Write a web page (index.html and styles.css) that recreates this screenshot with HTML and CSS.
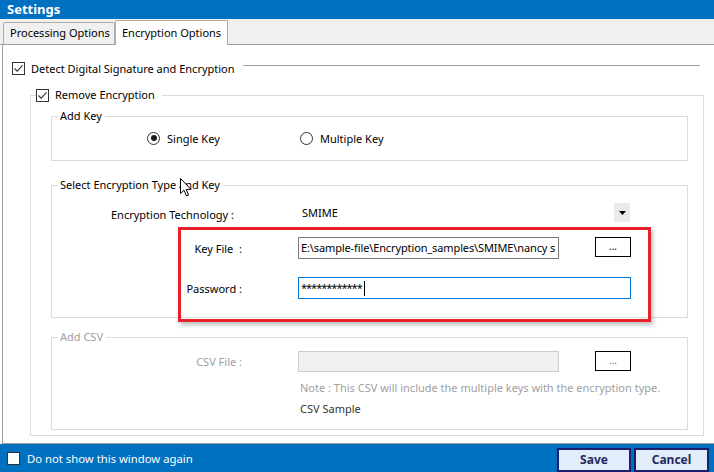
FILE: index.html
```html
<!DOCTYPE html>
<html>
<head>
<meta charset="utf-8">
<title>Settings</title>
<link rel="stylesheet" href="styles.css">
</head>
<body>
<div class="window">
  <div class="titlebar">Settings</div>
  <div class="tabstrip">
    <div class="tab">Processing Options</div>
    <div class="tab active">Encryption Options</div>
  </div>
  <div class="panel">
    <div class="detect-row">
      <span class="chk"><svg viewBox="0 0 13 13" width="13" height="13"><path d="M2.5 6.5 L5.2 9.2 L10.5 3.4" fill="none" stroke="#333" stroke-width="1.1"/></svg></span>
      <span class="detect-label">Detect Digital Signature and Encryption</span>
      <span class="rule"></span>
    </div>
    <fieldset class="grp grp-remove">
      <legend class="legend-chk"><span class="chk"><svg viewBox="0 0 13 13" width="13" height="13"><path d="M2.5 6.5 L5.2 9.2 L10.5 3.4" fill="none" stroke="#333" stroke-width="1.1"/></svg></span><span class="legend-text">Remove Encryption</span></legend>

      <fieldset class="grp grp-inner grp-addkey">
        <legend>Add Key</legend>
        <div class="radio-row">
          <div class="radio-item"><span class="radio on"></span><span>Single Key</span></div>
          <div class="radio-item"><span class="radio"></span><span>Multiple Key</span></div>
        </div>
      </fieldset>

      <fieldset class="grp grp-inner grp-select">
        <legend>Select Encryption Type and Key</legend>
        <div class="form-row row-tech">
          <span class="flabel tech-label">Encryption Technology :</span>
          <div class="combo"><span class="combo-text">SMIME</span><span class="combo-arrow"><svg viewBox="0 0 7 4" width="7" height="4"><path d="M0 0 H7 L3.5 4 Z" fill="#000"/></svg></span></div>
        </div>
        <div class="form-row row-key">
          <span class="flabel">Key File&nbsp; :</span>
          <div class="textbox keyfile">E:\sample-file\Encryption_samples\SMIME\nancy s</div>
          <div class="dots-btn">...</div>
        </div>
        <div class="form-row row-pwd">
          <span class="flabel">Password :</span>
          <div class="textbox password"><span class="stars">************</span><span class="caret"></span></div>
        </div>
      </fieldset>

      <fieldset class="grp grp-inner grp-csv">
        <legend>Add CSV</legend>
        <div class="form-row row-csv">
          <span class="flabel">CSV File :</span>
          <div class="textbox csvfile"></div>
          <div class="dots-btn dim">...</div>
        </div>
        <div class="note">Note : This CSV will include the multiple keys with the encryption type.</div>
        <div class="sample">CSV Sample</div>
      </fieldset>
    </fieldset>
  </div>
  <div class="footer">
    <div class="dont-show"><span class="chk white"></span><span>Do not show this window again</span></div>
    <div class="actions">
      <div class="action-btn">Save</div>
      <div class="action-btn">Cancel</div>
    </div>
  </div>
  <div class="highlight"></div>
  <svg class="cursor" viewBox="0 0 12 19" width="12" height="19"><path d="M0.5 0.5 L0.5 15.5 L4 12.2 L6.5 18 L8.6 17.1 L6.2 11.4 L11 11.4 Z" fill="#fff" stroke="#000" stroke-width="1"/></svg>
</div>
</body>
</html>
```
FILE: styles.css
```css
* { box-sizing: border-box; }
body {
  margin: 0;
  font-family: "Noto Sans", "Open Sans", sans-serif;
  font-size: 11px;
  color: #000;
}
.window {
  position: relative;
  width: 714px;
  height: 472px;
  overflow: hidden;
  background: #fff;
}
.titlebar {
  height: 19px;
  background: #0070c0;
  color: #fff;
  font-weight: bold;
  font-size: 13px;
  line-height: 19px;
  padding-left: 7px;
}
.tabstrip {
  height: 26px;
  background: #f0f0f0;
  border-bottom: 1px solid #a0a0a0;
  display: flex;
  align-items: flex-end;
  padding-left: 3px;
}
.tab {
  height: 22px;
  border: 1px solid #acacac;
  border-bottom: none;
  padding: 0 0 0 6px;
  width: 112px;
  line-height: 20px;
  background: #f0f0f0;
  border-radius: 2px 2px 0 0;
}
.tab.active {
  height: 25px;
  width: 113px;
  margin-bottom: -1px;
  background: #fff;
  line-height: 24px;
  padding-left: 6px;
}
.panel {
  height: 399px;
  margin-left: 2px;
  border-left: 1px solid #a0a0a0;
  border-bottom: 1px solid #a0a0a0;
  padding-top: 16px;
  overflow: hidden;
}
.detect-row {
  display: flex;
  align-items: center;
  height: 14px;
}
.chk {
  display: inline-block;
  width: 13px;
  height: 13px;
  border: 1px solid #333;
  background: #fff;
  flex: none;
  position: relative;
}
.chk svg {
  display: block;
  margin: -1px 0 0 -1px;
}
.detect-row .chk { margin-left: 9px; }
.detect-label { margin-left: 6px; white-space: nowrap; }
.rule {
  flex: 1;
  height: 1px;
  background: #a0a0a0;
  align-self: flex-start;
  margin-top: 4px;
  margin-left: 8px;
  margin-right: 14px;
}
.grp {
  border: 1px solid #dcdcdc;
  margin: 0;
  padding: 0;
  min-width: 0;
}
.grp > legend {
  padding: 0 3px 0 2px;
  margin-left: 6px;
  line-height: 14px;
  height: 14px;
  white-space: nowrap;
}
.grp-remove {
  margin: 13px 0 0 27px;
  width: 674px;
  padding-bottom: 5px;
}
.grp-remove > legend.legend-chk {
  display: flex;
  align-items: center;
  margin-left: 5px;
  padding: 0 7px 0 0;
}
.legend-chk .legend-text { margin-left: 6px; }
.grp-inner {
  margin-left: 20px;
  width: 637px;
}
.grp-addkey { margin-top: 7px; }
.radio-row {
  display: flex;
  padding: 8px 0 15px 95px;
}
.radio-item {
  display: flex;
  align-items: center;
  width: 153px;
  height: 14px;
}
.radio {
  width: 13px;
  height: 13px;
  border: 1px solid #333;
  border-radius: 50%;
  margin-right: 7px;
  display: flex;
  align-items: center;
  justify-content: center;
  flex: none;
}
.radio.on::after {
  content: "";
  width: 6px;
  height: 6px;
  border-radius: 50%;
  background: #1a1a1a;
}
.grp-select {
  margin-top: 17px;
  padding-bottom: 18px;
}
.form-row {
  display: flex;
  align-items: center;
}
.flabel {
  width: 190px;
  text-align: right;
  flex: none;
  white-space: nowrap;
  margin-right: 56px;
}
.flabel.tech-label { padding-right: 8px; margin-top: 4px; }
.row-tech { margin-top: 11px; height: 19px; }
.combo {
  width: 332px;
  height: 19px;
  display: flex;
  align-items: center;
  justify-content: space-between;
}
.combo-text { padding-left: 4px; }
.combo-arrow {
  width: 16px;
  height: 19px;
  background: #ebebeb;
  display: flex;
  align-items: center;
  justify-content: center;
}
.combo-arrow svg { display: block; }
.textbox {
  height: 22px;
  border: 1px solid #7a7a7a;
  background: #fff;
  padding: 0 2px;
  line-height: 20px;
  white-space: nowrap;
  overflow: hidden;
}
.row-key { margin-top: 15px; }
.keyfile { width: 261px; letter-spacing: -0.12px; }
.dots-btn {
  width: 36px;
  height: 20px;
  border: 1px solid #000;
  margin-left: 36px;
  margin-top: -2px;
  text-align: center;
  line-height: 16px;
  font-size: 10px;
  background: #fff;
}
.dots-btn.dim { color: #777; }
.row-pwd { margin-top: 18px; }
.password {
  width: 333px;
  border-color: #0078d7;
  display: flex;
  align-items: center;
}
.stars { letter-spacing: -1px; }
.caret {
  display: inline-block;
  width: 1px;
  height: 15px;
  background: #000;
  margin-left: 2px;
}
.grp-csv {
  margin-top: 12px;
  padding-bottom: 12px;
}
.grp-csv > legend { color: #a0a0a0; }
.row-csv { margin-top: 7px; }
.row-csv .flabel { color: #a0a0a0; }
.csvfile {
  width: 261px;
  height: 21px;
  background: #f0f0f0;
  border-color: #cccccc;
}
.row-csv .dots-btn { margin-top: -1px; }
.note {
  margin: 8px 0 0 248px;
  color: #a0a0a0;
  line-height: 16px;
  white-space: nowrap;
}
.sample {
  margin: 5px 0 0 248px;
  color: #333;
  line-height: 16px;
}
.footer {
  height: 28px;
  background: #0070c0;
  display: flex;
  align-items: center;
  justify-content: space-between;
  color: #fff;
}
.dont-show {
  display: flex;
  align-items: center;
  padding-left: 7px;
  font-size: 11.3px;
}
.chk.white { margin-right: 7px; border-color: #333; }
.actions {
  display: flex;
  gap: 3px;
  margin-right: 5px;
  margin-top: 3px;
}
.action-btn {
  width: 75px;
  height: 24px;
  background: #e3ecfa;
  border: 2px solid #1b1f6b;
  color: #1f2a5c;
  font-weight: bold;
  font-size: 12px;
  text-align: center;
  line-height: 20px;
}
.action-btn:first-child { width: 74px; }
.highlight {
  position: absolute;
  left: 178px;
  top: 227px;
  width: 473px;
  height: 95px;
  border: 3px solid #e8202a;
  box-shadow: 2px 3px 4px rgba(0,0,0,0.25);
  pointer-events: none;
}
.cursor {
  position: absolute;
  left: 180px;
  top: 178px;
}
```
